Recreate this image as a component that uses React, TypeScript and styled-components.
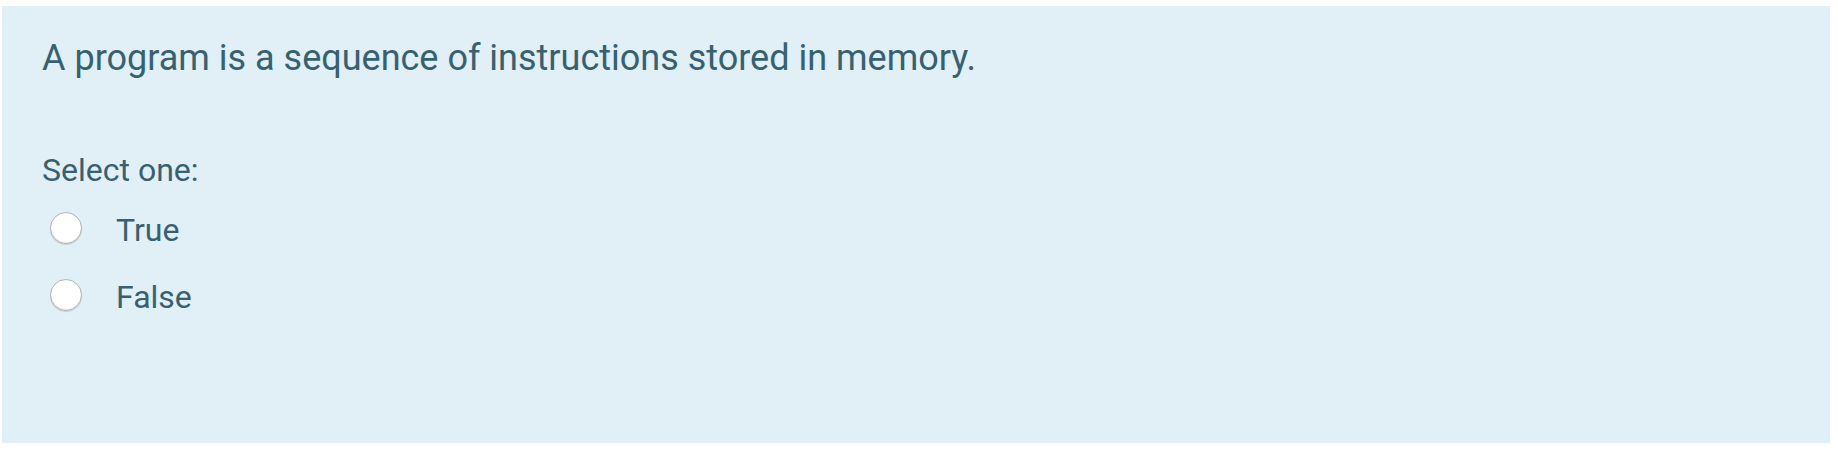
import React from "react";
import styled, { createGlobalStyle } from "styled-components";

const GlobalStyle = createGlobalStyle`
  html, body {
    margin: 0;
    padding: 0;
    background: #ffffff;
  }
  body {
    font-family: Roboto, "Liberation Sans", Arial, sans-serif;
  }
`;

const Page = styled.div`
  padding: 6px 8px 9px 2px;
`;

const Formulation = styled.div`
  box-sizing: border-box;
  height: 437px;
  padding: 25px 40px;
  background: #e1eff7;
  color: #37616f;
`;

const QuestionText = styled.p`
  margin: 0;
  font-size: 36px;
  line-height: 54px;
`;

const Prompt = styled.div`
  margin-top: 61px;
  font-size: 32px;
  line-height: 48px;
`;

const Answers = styled.div`
  display: flex;
  flex-direction: column;
  gap: 19px;
  margin-top: 12px;
`;

const Option = styled.label`
  display: flex;
  align-items: center;
  gap: 34px;
  padding-left: 8px;
  font-size: 32px;
  line-height: 48px;
  cursor: pointer;
`;

const Radio = styled.input.attrs({ type: "radio" })`
  appearance: none;
  box-sizing: border-box;
  width: 32px;
  height: 32px;
  margin: 0;
  border-radius: 50%;
  background: #ffffff;
  border: 1px solid #b4b4b4;
  box-shadow: inset 0 -1px 1px rgba(0, 0, 0, 0.08), 0 1px 1px rgba(0, 0, 0, 0.12);
  flex-shrink: 0;
  position: relative;
  top: -2px;
`;

const options = ["True", "False"];

export default function App() {
  return (
    <>
      <GlobalStyle />
      <Page>
        <Formulation>
          <QuestionText>A program is a sequence of instructions stored in memory.</QuestionText>
          <Prompt>Select one:</Prompt>
          <Answers>
            {options.map((o) => (
              <Option key={o}>
                <Radio name="answer" value={o} />
                <span>{o}</span>
              </Option>
            ))}
          </Answers>
        </Formulation>
      </Page>
    </>
  );
}
